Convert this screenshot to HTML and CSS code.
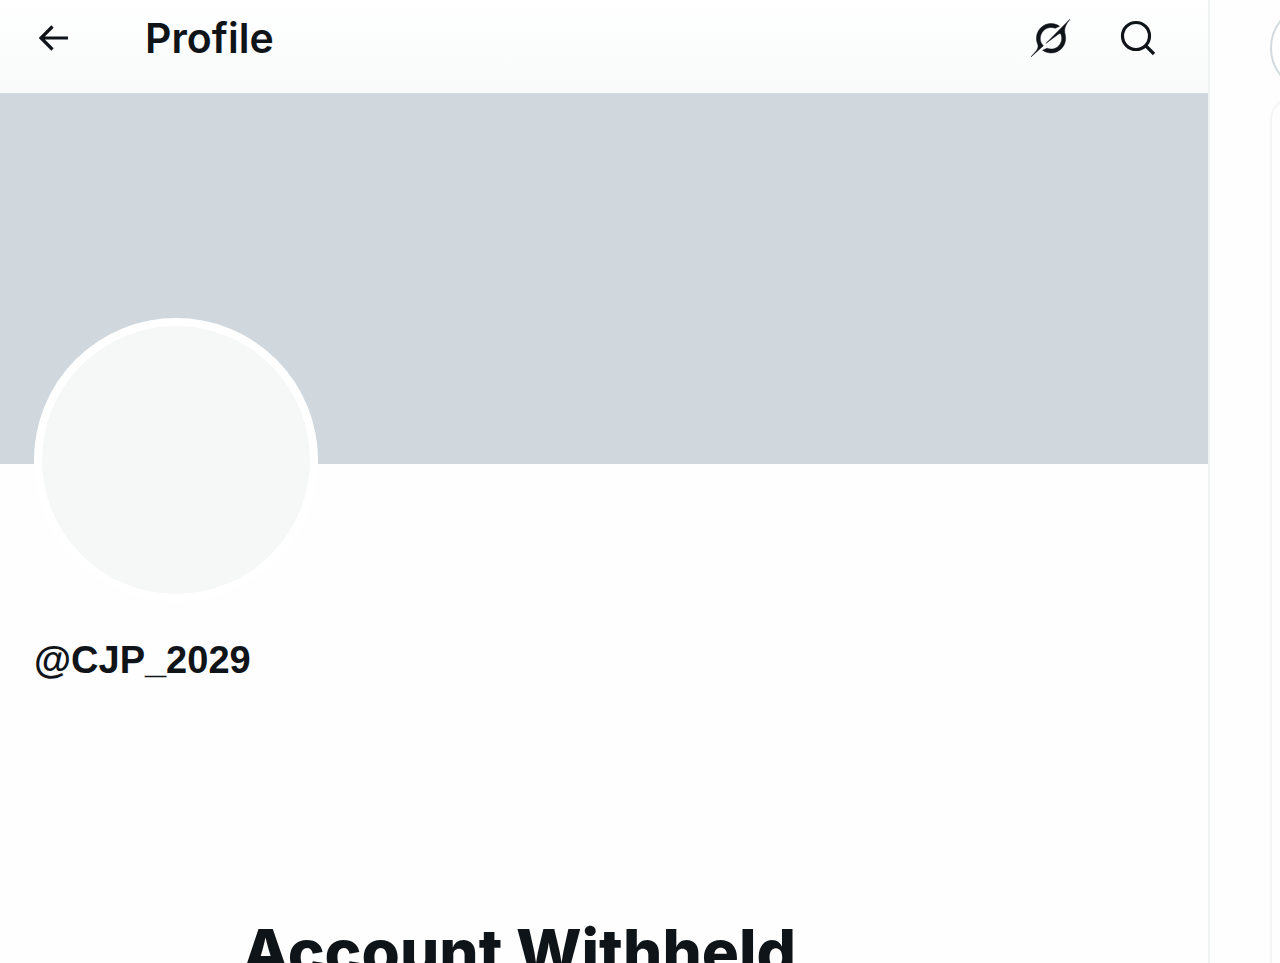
FILE: index.html
```html
<!DOCTYPE html>
<html lang="en">
<head>
    <meta charset="UTF-8">
    <meta name="viewport" content="width=device-width, initial-scale=1.0">
    <title>Profile</title>
    <link rel="stylesheet" href="styles.css">
</head>
<body>
    <main class="profile">
        <header class="top-bar">
            <button class="icon-button" type="button" aria-label="Back">
                <svg width="32" height="28" viewBox="0 0 32 28" fill="none" stroke="#0f1419" stroke-width="3.2">
                    <path d="M31 14H4M15.5 2.5L4 14L15.5 25.5"/>
                </svg>
            </button>
            <h2 class="top-title">Profile</h2>
            <div class="top-actions">
                <button class="icon-button" type="button" aria-label="Profile summary">
                    <svg width="39" height="38" viewBox="0 0 33 32" fill="#0f1419" stroke="#0f1419" stroke-width="0.4">
                        <path d="M12.745 20.54l10.97-8.19c.539-.4 1.307-.244 1.564.38 1.349 3.288.746 7.241-1.938 9.955-2.683 2.714-6.417 3.31-9.83 1.954l-3.728 1.745c5.347 3.697 11.84 2.782 15.898-1.324 3.219-3.255 4.216-7.692 3.284-11.693l.008.009c-1.351-5.878.332-8.227 3.782-13.031L33 0l-4.54 4.59v-.014L12.743 20.544m-2.263 1.987c-3.837-3.707-3.175-9.446.1-12.755 2.42-2.449 6.388-3.448 9.852-1.979l3.72-1.737c-.67-.49-1.53-1.017-2.515-1.387-4.455-1.854-9.789-.931-13.41 2.728-3.483 3.523-4.579 8.94-2.697 13.561 1.405 3.454-.899 5.898-3.22 8.364C1.49 30.2.666 31.074 0 32l10.478-9.466"/>
                    </svg>
                </button>
                <button class="icon-button" type="button" aria-label="Search">
                    <svg width="36" height="36" viewBox="0 0 36 36" fill="none" stroke="#0f1419" stroke-width="3.2">
                        <circle cx="16" cy="16" r="13.5"/>
                        <path d="M25.5 25.5L34 34"/>
                    </svg>
                </button>
            </div>
        </header>
        <div class="banner"></div>
        <section class="details">
            <div class="avatar"></div>
            <h1 class="handle">@CJP_2029</h1>
        </section>
        <section class="notice">
            <h2 class="notice-title">Account Withheld</h2>
        </section>
    </main>
    <aside class="sidebar">
        <input class="search-box" type="search" aria-label="Search">
        <div class="panel"></div>
    </aside>
</body>
</html>
```

FILE: styles.css
```css
* {
    box-sizing: border-box;
}

body {
    display: grid;
    grid-template-columns: minmax(0, 1fr) 72px;
    height: 100vh;
    margin: 0;
    overflow: hidden;
    background-color: #fefefe;
    color: #0f1419;
    font-family: Inter, "Liberation Sans", sans-serif;
}

h1, h2 {
    margin: 0;
}

.profile {
    overflow: hidden;
}

.top-bar {
    display: flex;
    align-items: center;
    height: 93px;
    padding: 0 52px 18px 37px;
    background: linear-gradient(#ffffff, #f8fafa);
}

.icon-button {
    display: flex;
    padding: 0;
    border: 0;
    background: none;
    cursor: pointer;
}

.top-title {
    margin-left: 76px;
    font-size: 41px;
    font-weight: 600;
    line-height: 48px;
}

.top-actions {
    display: flex;
    align-items: center;
    gap: 50px;
    margin-left: auto;
}

.banner {
    height: 371px;
    background-color: #d0d8de;
}

.details {
    padding: 0 34px;
}

/* Pulled up so it overlaps the banner */
.avatar {
    position: relative;
    width: 284px;
    height: 284px;
    margin-top: -146px;
    border: 8px solid #ffffff;
    border-radius: 50%;
    background-color: #f6f8f8;
}

.handle {
    margin-top: 34px;
    font-family: "Liberation Sans", sans-serif;
    font-size: 38px;
    font-weight: 700;
    line-height: 48px;
}

.notice {
    max-width: 724px;
    margin: 232px auto 0;
}

.notice-title {
    font-size: 62px;
    font-weight: 800;
    line-height: 72px;
    white-space: nowrap;
}

.sidebar {
    overflow: hidden;
    padding: 4px 0 0 60px;
    border-left: 2px solid #f1f4f5;
}

.search-box {
    display: block;
    width: 700px;
    height: 88px;
    padding: 0 44px;
    border: 2px solid #d3dadd;
    border-radius: 44px;
    background-color: #ffffff;
}

.panel {
    width: 700px;
    height: 1000px;
    margin-top: 4px;
    border: 2px solid #f3f5f6;
    border-radius: 24px;
}
```
